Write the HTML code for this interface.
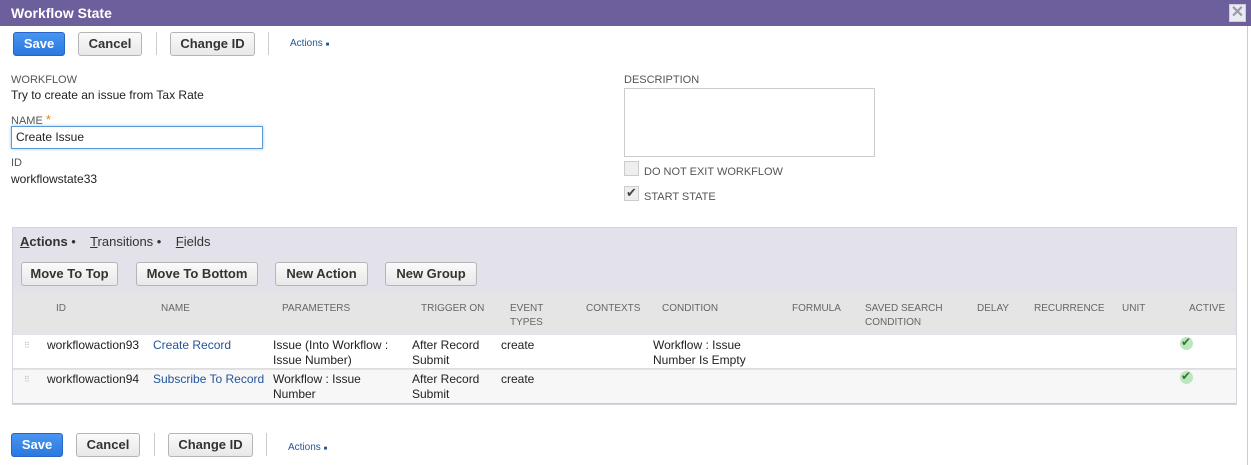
<!DOCTYPE html>
<html><head><meta charset="utf-8"><style>
*{box-sizing:border-box}
body{margin:0;width:1251px;height:465px;background:#fff;font-family:"Liberation Sans",sans-serif;font-size:12px;color:#222;position:relative;overflow:hidden}
.a{position:absolute;white-space:nowrap}
.hdr{left:0;top:0;width:1251px;height:26px;background:#6d5f9b}
.btn{position:absolute;height:24px;border:1px solid #b5b5b5;border-radius:3px;background:linear-gradient(#fafafa,#e8e8e8);font-size:13px;font-weight:bold;color:#333;text-align:center;line-height:22px}
.blue{background:linear-gradient(#4a95f0,#2a78e0);border-color:#2766c4;color:#fff}
.sep{position:absolute;width:1px;background:#ccc}
.lbl{font-size:11px;color:#555}
.th{font-size:10px;color:#666;line-height:14px}
.lnk{color:#255599}
.chk{position:absolute;width:15px;height:15px;border:1px solid #ccc;background:#eee}
.ok{position:absolute;width:13px;height:13px;border-radius:50%;background:#bfe5bf}
</style></head><body>
<div class="a hdr"></div>
<div class="a" style="left:11px;top:5px;color:#fff;font-size:14px;font-weight:bold">Workflow State</div>
<div class="a" style="left:1229px;top:4px;width:17px;height:18px;background:#e8ebf0;border:1px solid #ccd;color:#99a;font-size:16px;font-weight:bold;line-height:16px;text-align:center">✕</div>
<div class="a" style="left:1247px;top:26px;width:1px;height:439px;background:#ccc"></div>

<div class="btn blue" style="left:13px;top:32px;width:52px">Save</div>
<div class="btn" style="left:78px;top:32px;width:64px">Cancel</div>
<div class="sep" style="left:156px;top:32px;height:23px"></div>
<div class="btn" style="left:170px;top:32px;width:85px">Change ID</div>
<div class="sep" style="left:268px;top:32px;height:23px"></div>
<div class="a lnk" style="left:290px;top:38px;font-size:10px">Actions <span style="font-size:6px">■</span></div>

<div class="a lbl" style="left:11px;top:74px">WORKFLOW</div>
<div class="a" style="left:11px;top:88px">Try to create an issue from Tax Rate</div>
<div class="a lbl" style="left:11px;top:112px">NAME <span style="color:#e08a00;font-size:13px">*</span></div>
<div class="a" style="left:11px;top:126px;width:252px;height:23px;border:1px solid #5b9bd5;box-shadow:0 0 3px #9cc3ea;padding:4px 4px;line-height:13px">Create Issue</div>
<div class="a lbl" style="left:11px;top:157px">ID</div>
<div class="a" style="left:11px;top:172px">workflowstate33</div>

<div class="a lbl" style="left:624px;top:74px">DESCRIPTION</div>
<div class="a" style="left:624px;top:88px;width:251px;height:69px;border:1px solid #ccc"></div>
<div class="chk" style="left:624px;top:161px"></div>
<div class="a lbl" style="left:644px;top:166px">DO NOT EXIT WORKFLOW</div>
<div class="chk" style="left:624px;top:186px;font-size:13px;line-height:12px;color:#444;text-align:center">✔</div>
<div class="a lbl" style="left:644px;top:191px">START STATE</div>

<div class="a" style="left:12px;top:227px;width:1225px;height:178px;background:#e3e1ea;border:1px solid #d6d4de"></div>
<div class="a" style="left:20px;top:234px;font-size:13px;color:#333"><b><u>A</u>ctions</b> •&nbsp;&nbsp;&nbsp; <u>T</u>ransitions •&nbsp;&nbsp;&nbsp; <u>F</u>ields</div>
<div class="btn" style="left:21px;top:262px;width:97px">Move To Top</div>
<div class="btn" style="left:136px;top:262px;width:122px">Move To Bottom</div>
<div class="btn" style="left:275px;top:262px;width:93px">New Action</div>
<div class="btn" style="left:385px;top:262px;width:92px">New Group</div>

<div class="a" style="left:13px;top:293px;width:1223px;height:41px;background:#e5e5e5"></div>
<div class="a" style="left:13px;top:335px;width:1223px;height:34px;background:#fff;border-bottom:1px solid #ddd"></div>
<div class="a" style="left:13px;top:370px;width:1223px;height:34px;background:#f7f7f7;border-bottom:1px solid #ccc"></div>

<div class="a th" style="left:56px;top:302px">ID</div>
<div class="a th" style="left:161px;top:302px">NAME</div>
<div class="a th" style="left:282px;top:302px">PARAMETERS</div>
<div class="a th" style="left:421px;top:302px">TRIGGER ON</div>
<div class="a th" style="left:510px;top:302px">EVENT<br>TYPES</div>
<div class="a th" style="left:586px;top:302px">CONTEXTS</div>
<div class="a th" style="left:662px;top:302px">CONDITION</div>
<div class="a th" style="left:792px;top:302px">FORMULA</div>
<div class="a th" style="left:865px;top:302px">SAVED SEARCH<br>CONDITION</div>
<div class="a th" style="left:977px;top:302px">DELAY</div>
<div class="a th" style="left:1034px;top:302px">RECURRENCE</div>
<div class="a th" style="left:1122px;top:302px">UNIT</div>
<div class="a th" style="left:1189px;top:302px">ACTIVE</div>

<div class="a" style="left:24px;top:344px;color:#bbb;font-size:8px;line-height:4px">⠿</div>
<div class="a" style="left:47px;top:338px;line-height:15px">workflowaction93</div>
<div class="a lnk" style="left:153px;top:338px;line-height:15px">Create Record</div>
<div class="a" style="left:273px;top:338px;line-height:15px">Issue (Into Workflow :<br>Issue Number)</div>
<div class="a" style="left:412px;top:338px;line-height:15px">After Record<br>Submit</div>
<div class="a" style="left:501px;top:338px;line-height:15px">create</div>
<div class="a" style="left:653px;top:338px;line-height:15px">Workflow : Issue<br>Number Is Empty</div>
<div class="ok" style="left:1180px;top:337px"></div><div class="a" style="left:1181px;top:335px;color:#2a7a2a;font-size:12px">✔</div>

<div class="a" style="left:24px;top:378px;color:#bbb;font-size:8px;line-height:4px">⠿</div>
<div class="a" style="left:47px;top:372px;line-height:15px">workflowaction94</div>
<div class="a lnk" style="left:153px;top:372px;line-height:15px">Subscribe To Record</div>
<div class="a" style="left:273px;top:372px;line-height:15px">Workflow : Issue<br>Number</div>
<div class="a" style="left:412px;top:372px;line-height:15px">After Record<br>Submit</div>
<div class="a" style="left:501px;top:372px;line-height:15px">create</div>
<div class="ok" style="left:1180px;top:371px"></div><div class="a" style="left:1181px;top:369px;color:#2a7a2a;font-size:12px">✔</div>

<div class="btn blue" style="left:11px;top:433px;width:52px">Save</div>
<div class="btn" style="left:76px;top:433px;width:64px">Cancel</div>
<div class="sep" style="left:154px;top:433px;height:23px"></div>
<div class="btn" style="left:168px;top:433px;width:85px">Change ID</div>
<div class="sep" style="left:266px;top:433px;height:23px"></div>
<div class="a lnk" style="left:288px;top:442px;font-size:10px">Actions <span style="font-size:6px">■</span></div>
</body></html>
